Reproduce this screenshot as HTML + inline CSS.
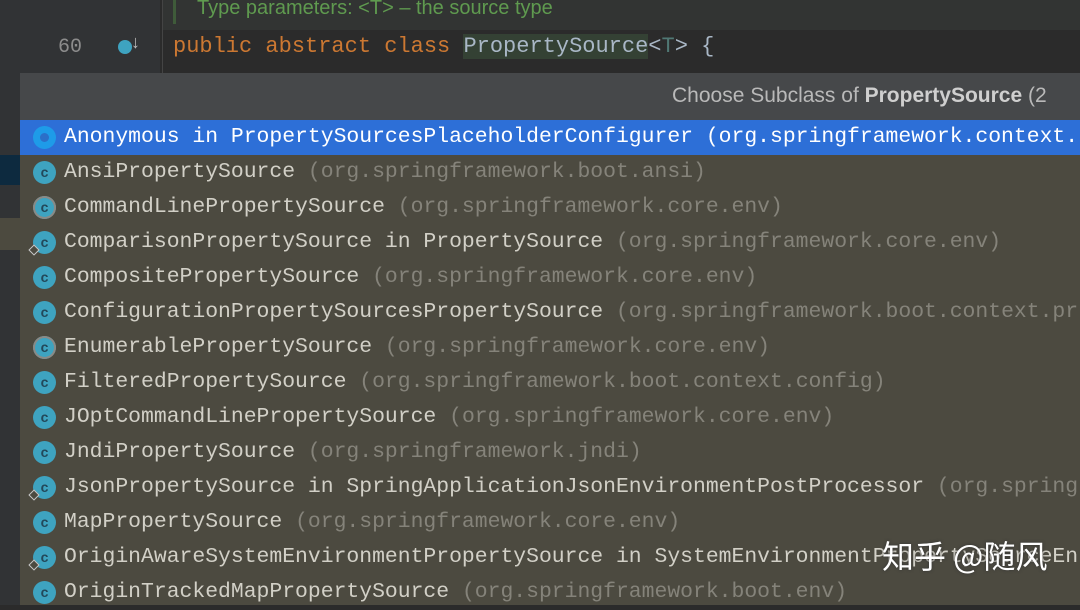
<!DOCTYPE html>
<html><head><meta charset="utf-8"><style>
body{margin:0;width:1080px;height:605px;overflow:hidden;background:#2b2b2b;position:relative;font-family:"Liberation Mono",monospace}
.abs{position:absolute}
.row{position:absolute;left:20px;width:1060px;height:35px;white-space:nowrap;font-size:21.4px;line-height:35px;color:#d2d0c7}
.row .t{position:absolute;left:44px}
.pk{color:#85837a}
.ic{position:absolute;left:13px;top:6px;width:23px;height:23px;border-radius:50%;background:#3ea3c0;color:#22485a;font:bold 14px "Liberation Sans",sans-serif;text-align:center;line-height:22px}
.lk::after{content:"";position:absolute;left:-3px;top:15px;width:6px;height:6px;border:1.5px solid #c8c8c8;transform:rotate(45deg);background:#4c4a40}
.ab{box-shadow:0 0 0 2px #8a8a86 inset}
</style></head><body>
<div class="abs" style="left:0;top:0;width:160px;height:605px;background:#313335"></div>
<div class="abs" style="left:0;top:155px;width:20px;height:30px;background:#0d2a3f"></div>
<div class="abs" style="left:0;top:218px;width:20px;height:32px;background:#4c4a3f"></div>
<div class="abs" style="left:162px;top:0;width:1px;height:73px;background:#444"></div>
<div class="abs" style="left:163px;top:0;width:917px;height:30px;background:#323433"></div>
<div class="abs" style="left:173px;top:0;width:3px;height:24px;background:#3f5b3a"></div>
<div class="abs" style="left:197px;top:-4px;font:20px 'Liberation Sans',sans-serif;color:#5f9a4f;line-height:24px">Type parameters: &lt;T&gt; – the source type</div>
<div class="abs" style="left:58px;top:36px;font-size:20px;color:#8c8c8c">60</div>
<div class="abs" style="left:118px;top:40px;width:14px;height:14px;border-radius:50%;background:#3ea3c0"></div>
<div class="abs" style="left:130px;top:34px;color:#bbb;font-size:18px">↓</div>
<div class="abs" style="left:173px;top:34px;font-size:22px;color:#a9b7c6;white-space:pre"><span style="color:#cc7832">public abstract class </span><span style="background:#344134">PropertySource</span><span style="color:#a9b7c6">&lt;</span><span style="color:#507874">T</span>&gt; {</div>
<div class="abs" style="left:20px;top:73px;width:1060px;height:532px;background:#4c4a40"></div>
<div class="abs" style="left:20px;top:73px;width:1060px;height:47px;background:#46484a"></div>
<div class="abs" style="left:672px;top:84px;font:21px 'Liberation Sans',sans-serif;color:#b9b9b9;white-space:nowrap">Choose Subclass of <b style="color:#cfcfcf">PropertySource</b> (2</div>
<div class="row" style="top:120px;background:#2d6fd7;color:#fff"><div class="ic" style="background:#1e9be8;color:#1e9be8"><div style="position:absolute;left:7px;top:7px;width:9px;height:9px;border-radius:50%;background:#2b6fc8"></div></div><span class="t">Anonymous in PropertySourcesPlaceholderConfigurer (org.springframework.context.</span></div>
<div class="row" style="top:155px"><div class="ic">c</div><span class="t">AnsiPropertySource <span class="pk">(org.springframework.boot.ansi)</span></span></div>
<div class="row" style="top:190px"><div class="ic ab">c</div><span class="t">CommandLinePropertySource <span class="pk">(org.springframework.core.env)</span></span></div>
<div class="row" style="top:225px"><div class="ic lk">c</div><span class="t">ComparisonPropertySource in PropertySource <span class="pk">(org.springframework.core.env)</span></span></div>
<div class="row" style="top:260px"><div class="ic">c</div><span class="t">CompositePropertySource <span class="pk">(org.springframework.core.env)</span></span></div>
<div class="row" style="top:295px"><div class="ic">c</div><span class="t">ConfigurationPropertySourcesPropertySource <span class="pk">(org.springframework.boot.context.pr</span></span></div>
<div class="row" style="top:330px"><div class="ic ab">c</div><span class="t">EnumerablePropertySource <span class="pk">(org.springframework.core.env)</span></span></div>
<div class="row" style="top:365px"><div class="ic">c</div><span class="t">FilteredPropertySource <span class="pk">(org.springframework.boot.context.config)</span></span></div>
<div class="row" style="top:400px"><div class="ic">c</div><span class="t">JOptCommandLinePropertySource <span class="pk">(org.springframework.core.env)</span></span></div>
<div class="row" style="top:435px"><div class="ic">c</div><span class="t">JndiPropertySource <span class="pk">(org.springframework.jndi)</span></span></div>
<div class="row" style="top:470px"><div class="ic lk">c</div><span class="t">JsonPropertySource in SpringApplicationJsonEnvironmentPostProcessor <span class="pk">(org.spring</span></span></div>
<div class="row" style="top:505px"><div class="ic">c</div><span class="t">MapPropertySource <span class="pk">(org.springframework.core.env)</span></span></div>
<div class="row" style="top:540px"><div class="ic lk">c</div><span class="t">OriginAwareSystemEnvironmentPropertySource in SystemEnvironmentPropertySourceEn</span></div>
<div class="row" style="top:575px"><div class="ic">c</div><span class="t">OriginTrackedMapPropertySource <span class="pk">(org.springframework.boot.env)</span></span></div>
<div class="abs" style="left:882px;top:532px;font:32px 'Noto Sans CJK SC',sans-serif;color:#fff;text-shadow:0 0 3px #333;white-space:nowrap">知乎 @随风</div>
</body></html>
